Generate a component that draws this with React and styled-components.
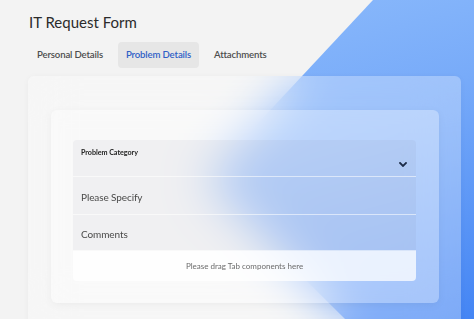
import React from "react";
import styled, { createGlobalStyle } from "styled-components";

const Global = createGlobalStyle`
  html, body { margin: 0; padding: 0; }
  body { background: #f3f3f3; font-family: "Lato", "Liberation Sans", sans-serif; }
`;

const Page = styled.div`
  position: relative;
  height: 100vh;
  overflow: hidden;
  background: #f3f3f3;
  padding: 13px 13px 0 28px;
  box-sizing: border-box;
  &::before {
    content: "";
    position: absolute;
    inset: 0;
    background: linear-gradient(165deg, #93c0fc 0%, #78abf9 45%, #4485f4 100%);
    clip-path: polygon(373px 0, 100% 0, 100% 100%, 345px 100%, 205px 180px);
    z-index: 0;
  }
`;

const Content = styled.div`
  position: relative;
  z-index: 1;
  display: flex;
  flex-direction: column;
`;

const Title = styled.h1`
  margin: 0 0 0 1px;
  font-size: 15px;
  line-height: 18px;
  font-weight: 400;
  color: #2b2b2b;
`;

const Tabs = styled.div`
  display: flex;
  gap: 7px;
  margin-top: 11px;
`;

const Tab = styled.div`
  height: 26px;
  line-height: 26px;
  padding: 0 8px 0 ${(p) => (p.$first ? 9 : 8)}px;
  border-radius: 4px;
  font-size: 9.6px;
  letter-spacing: -0.15px;
  font-weight: 600;
  color: ${(p) => (p.$active ? "#2f5fc6" : "#4d4d4d")};
  background: ${(p) => (p.$active ? "#e6e6e6" : "transparent")};
`;

const Outer = styled.div`
  margin-top: 8px;
  padding: 34px 22px 40px 23px;
  border-radius: 6px;
  background: rgba(255, 255, 255, 0.3);
  backdrop-filter: blur(24px);
  box-shadow: 0 1px 6px rgba(0, 0, 0, 0.04);
`;

const Card = styled.div`
  padding: 30px 23px 22px 22px;
  border-radius: 6px;
  background: rgba(255, 255, 255, 0.3);
  box-shadow: 0 2px 8px rgba(0, 0, 0, 0.05);
`;

const Form = styled.div`
  display: flex;
  flex-direction: column;
  border-radius: 4px;
  overflow: hidden;
`;

const Field = styled.div`
  display: flex;
  align-items: center;
  height: ${(p) => p.$h}px;
  padding: 2px 8px 0;
  background: rgba(110, 120, 135, 0.07);
  border-bottom: 1px solid rgba(255, 255, 255, 0.55);
  box-sizing: border-box;
  font-size: 10px;
  letter-spacing: -0.1px;
  color: #4a4a4a;
`;

const SelectField = styled(Field)`
  flex-direction: column;
  align-items: stretch;
  justify-content: space-between;
  padding: 8px 9px 9px 8px;
`;

const Label = styled.div`
  font-size: 7.2px;
  font-weight: 700;
  color: #232323;
  line-height: 10px;
  letter-spacing: -0.05px;
`;

const Chevron = styled.svg`
  align-self: flex-end;
  width: 8px;
  height: 5px;
`;

const DropZone = styled.div`
  height: 30px;
  display: flex;
  align-items: center;
  justify-content: center;
  background: rgba(255, 255, 255, 0.75);
  font-size: 8px;
  color: #6b6b6b;
`;

export default function App() {
  return (
    <Page>
      <Global />
      <Content>
        <Title>IT Request Form</Title>
        <Tabs>
          <Tab $first>Personal Details</Tab>
          <Tab $active>Problem Details</Tab>
          <Tab>Attachments</Tab>
        </Tabs>
        <Outer>
          <Card>
            <Form>
              <SelectField $h={37}>
                <Label>Problem Category</Label>
                <Chevron viewBox="0 0 8 5">
                  <path d="M1 1 L4 4 L7 1" fill="none" stroke="#1c2b48" strokeWidth="1.8" strokeLinecap="square" />
                </Chevron>
              </SelectField>
              <Field $h={38}>Please Specify</Field>
              <Field $h={36}>Comments</Field>
              <DropZone>Please drag Tab components here</DropZone>
            </Form>
          </Card>
        </Outer>
      </Content>
    </Page>
  );
}
